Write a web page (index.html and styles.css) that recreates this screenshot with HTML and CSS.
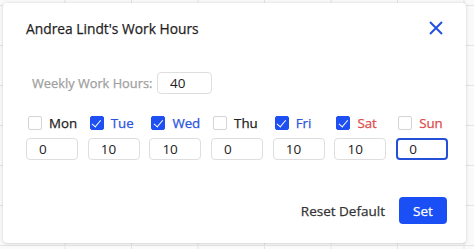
FILE: index.html
```html
<!DOCTYPE html>
<html lang="en">
<head>
    <meta charset="UTF-8">
    <title>Work Hours</title>
    <link rel="stylesheet" href="styles.css">
</head>
<body>
    <div class="dialog">
        <div class="dialog-head">
            <h2 class="dialog-title">Andrea Lindt's Work Hours</h2>
            <button class="close" aria-label="Close">
                <svg width="16" height="16" viewBox="0 0 16 16"><path d="M2 2 L14 14 M14 2 L2 14" stroke="#2450e0" stroke-width="2" fill="none"/></svg>
            </button>
        </div>

        <div class="weekly">
            <label class="weekly-label" for="weekly">Weekly Work Hours:</label>
            <input class="field weekly-input" id="weekly" type="text" value="40">
        </div>

        <div class="days">
            <div class="day">
                <label class="check"><span class="box"></span>Mon</label>
                <input class="field" type="text" value="0">
            </div>
            <div class="day on">
                <label class="check"><span class="box"></span>Tue</label>
                <input class="field" type="text" value="10">
            </div>
            <div class="day on">
                <label class="check"><span class="box"></span>Wed</label>
                <input class="field" type="text" value="10">
            </div>
            <div class="day">
                <label class="check"><span class="box"></span>Thu</label>
                <input class="field" type="text" value="0">
            </div>
            <div class="day on">
                <label class="check"><span class="box"></span>Fri</label>
                <input class="field" type="text" value="10">
            </div>
            <div class="day on weekend">
                <label class="check"><span class="box"></span>Sat</label>
                <input class="field" type="text" value="10">
            </div>
            <div class="day weekend">
                <label class="check"><span class="box"></span>Sun</label>
                <input class="field focus" type="text" value="0">
            </div>
        </div>

        <div class="dialog-foot">
            <button class="btn-link">Reset Default</button>
            <button class="btn-primary">Set</button>
        </div>
    </div>
</body>
</html>
```

FILE: styles.css
```css
* {
    margin: 0;
    padding: 0;
    box-sizing: border-box;
}

body {
    width: 474px;
    height: 249px;
    overflow: hidden;
    font-family: "Open Sans", "Noto Sans", sans-serif;
    color: #222;
    background-color: #fafafa;
    /* calendar grid behind the dialog */
    background-image:
        linear-gradient(to right, #e4e4e4 1px, transparent 1px),
        linear-gradient(to bottom, #e4e4e4 1px, transparent 1px);
    background-size: 66.5px 40px;
    background-position: -2px 5px;
    padding: 3px;
}

.dialog {
    width: 463px;
    height: 240px;
    background: #fff;
    border-radius: 4px;
    box-shadow: 0 0 4px rgba(0, 0, 0, .12), 0 1px 2px rgba(0, 0, 0, .08);
    padding: 13px 19px 0 23px;
    display: flex;
    flex-direction: column;
}

/* medium weight look: the installed face has no 500 */
.dialog-title,
.weekly-label,
.check,
.btn-link,
.btn-primary {
    -webkit-text-stroke: 0.25px currentColor;
}

.dialog-head {
    display: flex;
    align-items: center;
    justify-content: space-between;
    height: 24px;
}

.dialog-title {
    font-size: 13.8px;
    font-weight: 400;
    color: #1f1f1f;
}

.close {
    border: 0;
    background: none;
    width: 16px;
    height: 16px;
    margin-right: 3px;
    display: flex;
}

.weekly {
    display: flex;
    align-items: center;
    margin-top: 32px;
    padding-left: 6px;
}

.weekly-label {
    font-size: 12.8px;
    color: #a0a0a0;
    width: 125px;
    flex-shrink: 0;
    white-space: nowrap;
}

.field {
    height: 22px;
    width: 52px;
    border: 1px solid #dedede;
    border-radius: 4px;
    font-family: inherit;
    font-size: 13.5px;
    color: #222;
    padding-left: 12px;
    outline: none;
}

.weekly-input {
    width: 55px;
}

.days {
    display: grid;
    grid-template-columns: repeat(7, 52px);
    column-gap: 9.7px;
    margin-top: 21px;
}

.day {
    display: flex;
    flex-direction: column;
    gap: 7px;
}

.check {
    display: flex;
    align-items: center;
    height: 16px;
    padding-left: 2px;
    font-size: 13.3px;
    color: #222;
}

.box {
    width: 14px;
    height: 14px;
    border: 1px solid #d4d4d4;
    border-radius: 2px;
    margin-right: 7px;
    background: #fff;
    position: relative;
    -webkit-text-stroke: 0;
}

.day.on .check {
    color: #2a55e0;
}

.day.weekend .check {
    color: #e04b4b;
}

.day.on .box {
    background: #1d4ff2;
    border-color: #1d4ff2;
}

.day.on .box::after {
    content: "";
    position: absolute;
    left: 3.5px;
    top: 1px;
    width: 4px;
    height: 7.5px;
    border: solid #fff;
    border-width: 0 1.8px 1.8px 0;
    transform: rotate(40deg);
}

.field.focus {
    border: 2px solid #2450d8;
    padding-left: 11px;
}

.dialog-foot {
    display: flex;
    justify-content: flex-end;
    align-items: center;
    gap: 14px;
    margin-top: 37px;
}

.btn-link {
    border: 0;
    background: none;
    font-family: inherit;
    font-size: 13.5px;
    color: #333;
}

.btn-primary {
    border: 0;
    background: #1a4ff5;
    color: #fff;
    border-radius: 4px;
    width: 48px;
    height: 27px;
    font-family: inherit;
    font-size: 13.5px;
}
```
